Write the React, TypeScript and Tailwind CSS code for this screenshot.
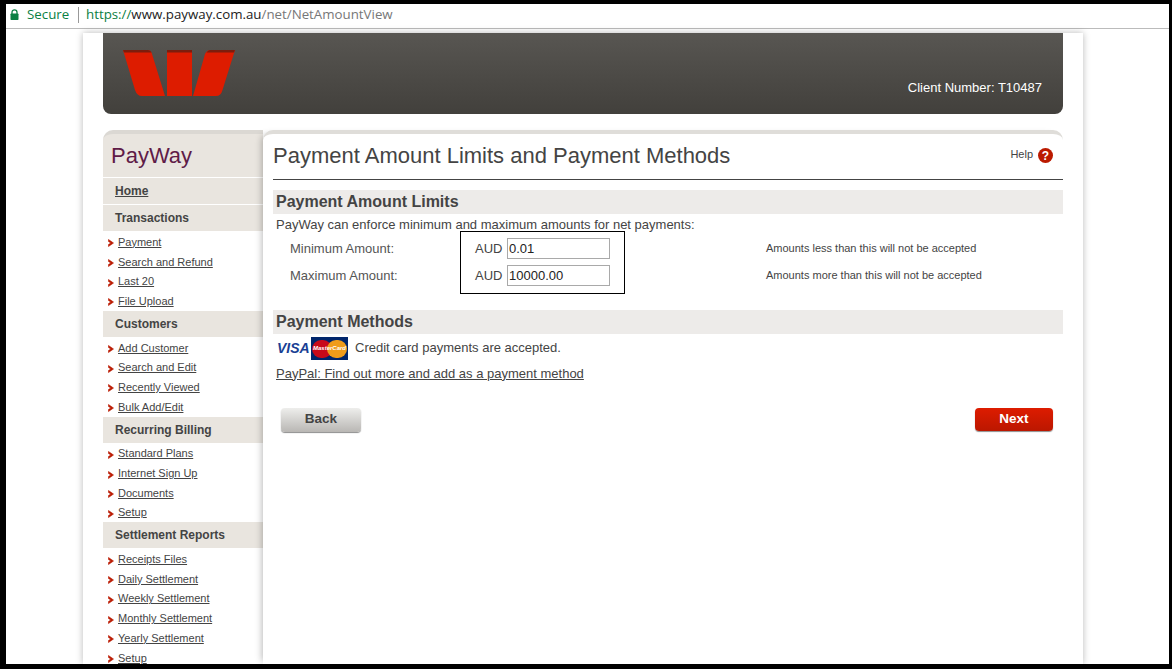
import React from 'react';

const sideGroups = [
  { title: 'Transactions', links: ['Payment', 'Search and Refund', 'Last 20', 'File Upload'] },
  { title: 'Customers', links: ['Add Customer', 'Search and Edit', 'Recently Viewed', 'Bulk Add/Edit'] },
  { title: 'Recurring Billing', links: ['Standard Plans', 'Internet Sign Up', 'Documents', 'Setup'] },
  { title: 'Settlement Reports', links: ['Receipts Files', 'Daily Settlement', 'Weekly Settlement', 'Monthly Settlement', 'Yearly Settlement', 'Setup'] },
];

const Logo: React.FC = () => (
  <svg width="112" height="46" viewBox="0 0 112 46" className="block">
    <path d="M0 0H25Q28 0 29 4L42 46H19Q14 46 12 40Z" fill="#dd1c00" />
    <path d="M44 0H69V46H44Z" fill="#dd1c00" />
    <path d="M112 0H87Q84 0 82 4L70 46H93Q98 46 99.500 40Z" fill="#dd1c00" />
    <path d="M0 0H25Q27.500 0 28.500 2.500H1ZM44 0H69V2.500H44ZM112 0H87Q85 0 83.500 2.500H111Z" fill="#7c1d0d" />
  </svg>
);

const Chevron: React.FC = () => (
  <svg width="6" height="8" viewBox="0 0 6 8" className="shrink-0">
    <path d="M0.500 0.500L5.500 4L0.500 7.500L0.500 5.500L2.800 4L0.500 2.500Z" fill="#bb1a00" stroke="#bb1a00" strokeWidth="0.6" />
  </svg>
);

const SideLink: React.FC<{ label: string }> = ({ label }) => (
  <div className="flex h-[19.700px] items-center pt-[3px] pl-[5px]">
    <span className="mt-[2px] mr-[4px] flex">
      <Chevron />
    </span>
    <a className="text-[11px] leading-none text-[#444] underline">{label}</a>
  </div>
);

const SectionHead: React.FC<{ title: string }> = ({ title }) => (
  <div className="flex h-[24px] items-center bg-[#edebe9] pl-[3px] text-[16px] font-bold text-[#444]">{title}</div>
);

const AmountRow: React.FC<{ label: string; value: string; note: string }> = ({ label, value, note }) => (
  <div className="flex h-[27px] items-center">
    <span className="w-[202px] pt-[1px] pl-[17px] text-[#555]">{label}</span>
    <span className="w-[32px] pt-[1px] text-[#444]">AUD</span>
    <input
      readOnly
      value={value}
      className="h-[21px] w-[103px] border border-[#a9a9a9] px-[1px] text-[13px] text-[#222] outline-none"
    />
    <span className="ml-[156px] text-[11px] text-[#444]">{note}</span>
  </div>
);

const App: React.FC = () => {
  return (
    <div className="h-[669px] w-[1172px] overflow-hidden bg-black pt-[4px] pr-[3px] pb-[5px] pl-[6px] font-['Liberation_Sans',Arial,sans-serif]">
      <div className="flex h-full flex-col overflow-hidden bg-white">
        {/* browser address bar */}
        <div className="flex h-[24px] shrink-0 items-center pb-[2px] pl-[4px] font-['Open_Sans',sans-serif] text-[13.300px]">
          <svg width="9" height="11" viewBox="0 0 9 11" className="mb-[2px]">
            <path d="M2 5V3.300a2.500 2.500 0 0 1 5 0V5" fill="none" stroke="#0b8043" strokeWidth="1.300" />
            <rect x="0.500" y="4.500" width="8" height="6.500" rx="0.700" fill="#0b8043" />
          </svg>
          <span className="ml-[8px] w-[51px] text-[#0b8043]">Secure</span>
          <span className="h-[16px] w-px bg-[#999]" />
          <span className="ml-[7px] text-[#0b8043]">
            https://<span className="text-[#222]">www.payway.com.au</span>
            <span className="text-[#777]">/net/NetAmountView</span>
          </span>
        </div>
        <div className="h-[5px] shrink-0 border-t border-[#bbb]" />

        <div className="flex min-h-0 flex-1">
          {/* page column */}
          <div className="ml-[77px] w-[1000px] bg-white px-[20px] shadow-[0_0_7px_rgba(0,0,0,0.28)]">
            <div className="flex h-[81px] items-start justify-between rounded-b-[8px] bg-gradient-to-b from-[#585652] to-[#42403c] pt-[17px] pr-[21px] pl-[20px]">
              <Logo />
              <span className="mt-[28px] text-[13px] text-white">Client Number: T10487</span>
            </div>

            <div className="mt-[16px] flex">
              {/* side menu */}
              <div className="w-[160px] shrink-0">
                <div className="h-[47px] rounded-tl-[10px] border-t-[4px] border-[#dbd8d3] bg-[#e9e5df] pt-[4px] pl-[8px] text-[22px] leading-[36px] text-[#5f1b47]">
                  PayWay
                </div>
                <div className="mt-px flex h-[26px] items-center bg-[#e9e5df] pl-[12px] text-[12px] font-bold text-[#444] underline">
                  Home
                </div>
                {sideGroups.map((group) => (
                  <div key={group.title}>
                    <div className="mt-px flex h-[26px] items-center bg-[#e9e5df] pl-[12px] text-[12px] font-bold text-[#444]">
                      {group.title}
                    </div>
                    <div>
                      {group.links.map((link) => (
                        <SideLink key={link} label={link} />
                      ))}
                    </div>
                  </div>
                ))}
              </div>

              {/* main panel */}
              <div className="relative z-10 flex-1 rounded-t-[10px] border-t-[4px] border-[#dfddd9] bg-white pl-[10px] shadow-[-6px_0_7px_-5px_rgba(0,0,0,0.28)]">
                <div className="flex h-[46px] items-center justify-between border-b border-[#444] pb-[2px]">
                  <h1 className="text-[22px] text-[#444]">Payment Amount Limits and Payment Methods</h1>
                  <div className="mr-[10px] flex items-center gap-[5px] text-[11px] text-[#444]">
                    <span className="mb-[2px]">Help</span>
                    <span className="flex h-[15px] w-[15px] items-center justify-center rounded-full bg-[#bb1a00] text-[12px] font-bold text-white">
                      ?
                    </span>
                  </div>
                </div>

                <div className="mt-[10px]">
                  <SectionHead title="Payment Amount Limits" />
                  <div className="relative text-[13px]">
                    <p className="pt-[2px] pl-[3px] leading-[18px] text-[#444]">
                      PayWay can enforce minimum and maximum amounts for net payments:
                    </p>
                    <div className="pt-[0.500px]">
                      <AmountRow label="Minimum Amount:" value="0.01" note="Amounts less than this will not be accepted" />
                      <AmountRow label="Maximum Amount:" value="10000.00" note="Amounts more than this will not be accepted" />
                    </div>
                    {/* annotation round the inputs */}
                    <div className="absolute top-[17px] left-[187px] h-[63px] w-[165px] border border-black" />
                  </div>
                </div>

                <div className="mt-[21px]">
                  <SectionHead title="Payment Methods" />
                  <div className="mt-[3px] flex h-[23px] items-center pl-[4px] text-[13px] text-[#444]">
                    <span className="w-[34px] text-[14px] font-bold text-[#1a3f94] italic">VISA</span>
                    <span className="relative h-[23px] w-[37px] overflow-hidden bg-[#00256b]">
                      <span className="absolute top-[3px] left-[1px] h-[18px] w-[20px] rounded-full bg-[#c80a1a]" />
                      <span className="absolute top-[3px] left-[16px] h-[18px] w-[20px] rounded-full bg-[#f09c1a]" />
                      <span className="absolute top-[7px] left-[2px] text-[6px] leading-[9px] font-bold whitespace-nowrap text-white italic">
                        MasterCard
                      </span>
                    </span>
                    <span className="ml-[7px]">Credit card payments are accepted.</span>
                  </div>
                  <a className="mt-[5px] block pl-[3px] text-[13px] leading-[18px] text-[#444] underline">
                    PayPal: Find out more and add as a payment method
                  </a>
                </div>

                <div className="mt-[25px] flex items-start justify-between pr-[10px] pl-[8px]">
                  <button className="h-[24px] w-[80px] rounded-[4px] bg-gradient-to-b from-[#eeeeec] to-[#b9b7b4] text-[13.500px] font-bold text-[#444] shadow-[0_1px_1px_rgba(0,0,0,0.45)]">
                    Back
                  </button>
                  <button className="h-[23px] w-[78px] rounded-[4px] bg-gradient-to-b from-[#dd1c00] to-[#bb1700] text-[13.500px] font-bold text-white shadow-[0_1px_1px_rgba(0,0,0,0.45)]">
                    Next
                  </button>
                </div>
              </div>
            </div>
          </div>
        </div>
      </div>
    </div>
  );
};

export default App;
